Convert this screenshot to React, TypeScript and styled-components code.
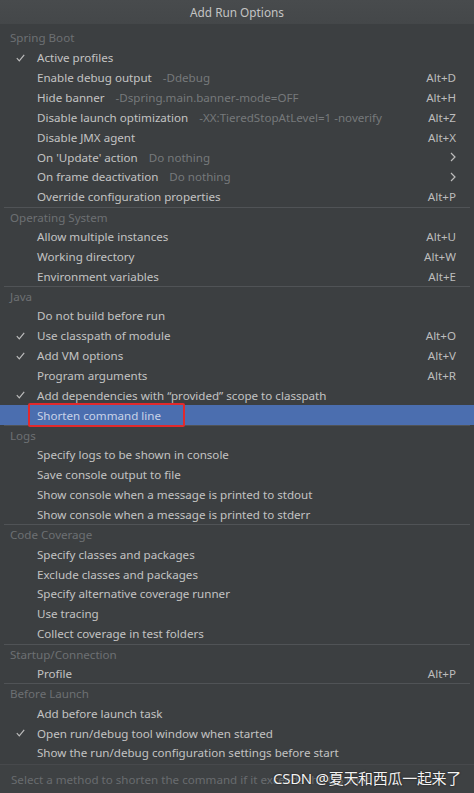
import React from "react";
import styled, { createGlobalStyle } from "styled-components";

const GlobalStyle = createGlobalStyle`
  html, body { margin: 0; padding: 0; background: #3c3f41; }
  body { font-family: "Noto Sans", "Open Sans", sans-serif; }
`;

const Popup = styled.div`
  width: 474px;
  height: 793px;
  background: #3c3f41;
  display: flex;
  flex-direction: column;
  overflow: hidden;
  position: relative;
  font-family: "Noto Sans", "Open Sans", sans-serif;
  font-size: 11.6px;
`;

const TitleBar = styled.div`
  height: 24px;
  flex: none;
  background: linear-gradient(#484b4d, #444749);
  color: #c4c4c4;
  display: flex;
  align-items: center;
  justify-content: center;
  font-size: 11.8px;
`;

const List = styled.div`
  flex: 1;
  padding-top: 4px;
  display: flex;
  flex-direction: column;
`;

const Header = styled.div<{ $sep?: boolean }>`
  height: 19.86px;
  box-sizing: border-box;
  display: flex;
  align-items: center;
  color: #6d7073;
  margin: 0 4px;
  padding-left: 6px;
  border-top: ${(p) => (p.$sep ? "1px solid #505356" : "none")};
`;

const Row = styled.div<{ $selected?: boolean }>`
  height: 19.86px;
  display: flex;
  align-items: center;
  position: relative;
  padding-right: 18px;
  background: ${(p) => (p.$selected ? "#4b6eaf" : "transparent")};
  color: ${(p) => (p.$selected ? "#c9d3e8" : "#c3c3c3")};
`;

const CheckCell = styled.div`
  width: 37px;
  flex: none;
  display: flex;
  align-items: center;
  padding-left: 16px;
  box-sizing: border-box;
`;

const Label = styled.span`
  white-space: nowrap;
`;

const Hint = styled.span`
  color: #76797b;
  margin-left: 11px;
  white-space: nowrap;
`;

const Shortcut = styled.span`
  margin-left: auto;
  color: #bdbdbd;
`;

const Arrow = styled.span`
  margin-left: auto;
  display: flex;
  align-items: center;
`;

const Highlight = styled.div`
  position: absolute;
  left: 28px;
  top: -2px;
  width: 157px;
  height: 24px;
  border: 2px solid #e2292c;
  border-radius: 2px;
  box-sizing: border-box;
`;

const Footer = styled.div`
  height: 28px;
  flex: none;
  border-top: 1px solid #47494c;
  background: #3e4143;
  color: #696c6f;
  display: flex;
  align-items: center;
  padding-left: 11px;
  white-space: nowrap;
  position: relative;
`;

const Watermark = styled.div`
  position: absolute;
  right: 13px;
  bottom: 5px;
  color: #f2f2f2;
  font-family: "Noto Sans", "Noto Sans CJK SC", sans-serif;
  font-size: 15px;
  text-shadow: 0 0 1px #222, 0 0 2px #222;
  letter-spacing: -0.3px;
`;

const Check = () => (
  <svg width="9" height="8" viewBox="0 0 9 8">
    <path d="M0.8 4.2 L3.3 6.9 L8.2 0.8" fill="none" stroke="#bcbcbc" strokeWidth="1.2" />
  </svg>
);

const Chevron = () => (
  <svg width="6" height="10" viewBox="0 0 6 10">
    <path d="M1 1 L5 5 L1 9" fill="none" stroke="#bcbcbc" strokeWidth="1.2" />
  </svg>
);

type Item = {
  label: string;
  checked?: boolean;
  hint?: string;
  shortcut?: string;
  arrow?: boolean;
  selected?: boolean;
};

type Section = { title: string; items: Item[] };

const sections: Section[] = [
  {
    title: "Spring Boot",
    items: [
      { label: "Active profiles", checked: true },
      { label: "Enable debug output", hint: "-Ddebug", shortcut: "Alt+D" },
      { label: "Hide banner", hint: "-Dspring.main.banner-mode=OFF", shortcut: "Alt+H" },
      {
        label: "Disable launch optimization",
        hint: "-XX:TieredStopAtLevel=1 -noverify",
        shortcut: "Alt+Z",
      },
      { label: "Disable JMX agent", shortcut: "Alt+X" },
      { label: "On 'Update' action", hint: "Do nothing", arrow: true },
      { label: "On frame deactivation", hint: "Do nothing", arrow: true },
      { label: "Override configuration properties", shortcut: "Alt+P" },
    ],
  },
  {
    title: "Operating System",
    items: [
      { label: "Allow multiple instances", shortcut: "Alt+U" },
      { label: "Working directory", shortcut: "Alt+W" },
      { label: "Environment variables", shortcut: "Alt+E" },
    ],
  },
  {
    title: "Java",
    items: [
      { label: "Do not build before run" },
      { label: "Use classpath of module", checked: true, shortcut: "Alt+O" },
      { label: "Add VM options", checked: true, shortcut: "Alt+V" },
      { label: "Program arguments", shortcut: "Alt+R" },
      { label: "Add dependencies with \u201cprovided\u201d scope to classpath", checked: true },
      { label: "Shorten command line", selected: true },
    ],
  },
  {
    title: "Logs",
    items: [
      { label: "Specify logs to be shown in console" },
      { label: "Save console output to file" },
      { label: "Show console when a message is printed to stdout" },
      { label: "Show console when a message is printed to stderr" },
    ],
  },
  {
    title: "Code Coverage",
    items: [
      { label: "Specify classes and packages" },
      { label: "Exclude classes and packages" },
      { label: "Specify alternative coverage runner" },
      { label: "Use tracing" },
      { label: "Collect coverage in test folders" },
    ],
  },
  {
    title: "Startup/Connection",
    items: [{ label: "Profile", shortcut: "Alt+P" }],
  },
  {
    title: "Before Launch",
    items: [
      { label: "Add before launch task" },
      { label: "Open run/debug tool window when started", checked: true },
      { label: "Show the run/debug configuration settings before start" },
    ],
  },
];

export default function App() {
  return (
    <>
      <GlobalStyle />
      <Popup>
        <TitleBar>Add Run Options</TitleBar>
        <List>
          {sections.map((s, si) => (
            <React.Fragment key={s.title}>
              <Header $sep={si > 0}>{s.title}</Header>
              {s.items.map((it) => (
                <Row key={it.label} $selected={it.selected}>
                  <CheckCell>{it.checked ? <Check /> : null}</CheckCell>
                  <Label>{it.label}</Label>
                  {it.hint ? <Hint>{it.hint}</Hint> : null}
                  {it.shortcut ? <Shortcut>{it.shortcut}</Shortcut> : null}
                  {it.arrow ? (
                    <Arrow>
                      <Chevron />
                    </Arrow>
                  ) : null}
                  {it.selected ? <Highlight /> : null}
                </Row>
              ))}
            </React.Fragment>
          ))}
        </List>
        <Footer>
          Select a method to shorten the command if it exceeds the OS limit
          <Watermark>CSDN @夏天和西瓜一起来了</Watermark>
        </Footer>
      </Popup>
    </>
  );
}
